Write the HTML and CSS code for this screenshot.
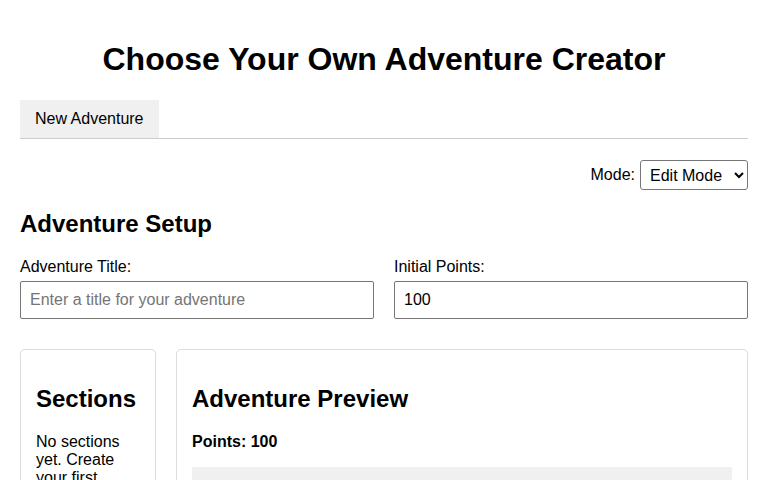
FILE: index.html
```html
<!DOCTYPE html>
<html>
<head>
<meta charset="utf-8">
<link rel="stylesheet" href="styles.css">
</head>
<body>
<div class="app">
  <h1>Choose Your Own Adventure Creator</h1>
  <div class="tabs">
    <button class="tab">New Adventure</button>
  </div>
  <div class="mode-row">
    <label for="mode">Mode:</label>
    <select id="mode" class="mode-select">
      <option>Edit Mode</option>
      <option>Play Mode</option>
    </select>
  </div>
  <h2>Adventure Setup</h2>
  <div class="setup">
    <div class="field">
      <label>Adventure Title:</label>
      <input type="text" placeholder="Enter a title for your adventure">
    </div>
    <div class="field">
      <label>Initial Points:</label>
      <input type="text" value="100">
    </div>
  </div>
  <div class="workspace">
    <div class="card sidebar">
      <h2>Sections</h2>
      <p>No sections yet. Create your first section to get started.</p>
    </div>
    <div class="card preview">
      <h2>Adventure Preview</h2>
      <p class="points">Points: 100</p>
      <div class="story-box">Start by creating a section.</div>
    </div>
  </div>
</div>
</body>
</html>
```
FILE: styles.css
```css
html, body {
  margin: 0;
  padding: 0;
  background: #fff;
}
body {
  font-family: "Liberation Sans", Arial, sans-serif;
  font-size: 16px;
  color: #000;
}
.app {
  padding: 20px;
}
h1 {
  font-size: 32px;
  text-align: center;
  margin: 21.44px 0;
}
h2 {
  font-size: 24px;
  margin: 19.92px 0;
}
.tabs {
  display: flex;
  border-bottom: 1px solid #ccc;
}
.tab {
  font-family: "Liberation Sans", Arial, sans-serif;
  font-size: 16px;
  padding: 10px 15px;
  background: #f0f0f0;
  border: none;
  color: #000;
}
.mode-row {
  display: flex;
  justify-content: flex-end;
  align-items: center;
  gap: 5px;
  margin: 21px 0 20px;
}
.mode-select {
  font-family: "Liberation Sans", Arial, sans-serif;
  font-size: 16px;
  padding: 5px;
  height: 30px;
  border: 1px solid #767676;
  border-radius: 3px;
  background: #fff;
  color: #000;
}
.setup {
  display: grid;
  grid-template-columns: 1fr 1fr;
  gap: 20px;
  margin-bottom: 30px;
}
.field label {
  display: block;
  margin-bottom: 5px;
}
.field input {
  display: block;
  width: 100%;
  box-sizing: border-box;
  font-family: "Liberation Sans", Arial, sans-serif;
  font-size: 16px;
  padding: 9px 9px;
  border: 1px solid #767676;
  border-radius: 2px;
  color: #000;
}
.field input::placeholder {
  color: #757575;
}
.workspace {
  display: flex;
  gap: 20px;
  align-items: flex-start;
}
.card {
  border: 1px solid #ddd;
  border-radius: 5px;
  padding: 15px;
}
.sidebar {
  width: 104px;
  flex: none;
}
.preview {
  flex: 1;
}
.points {
  font-weight: bold;
}
.story-box {
  background: #f0f0f0;
  padding: 20px;
  min-height: 100px;
}
```
